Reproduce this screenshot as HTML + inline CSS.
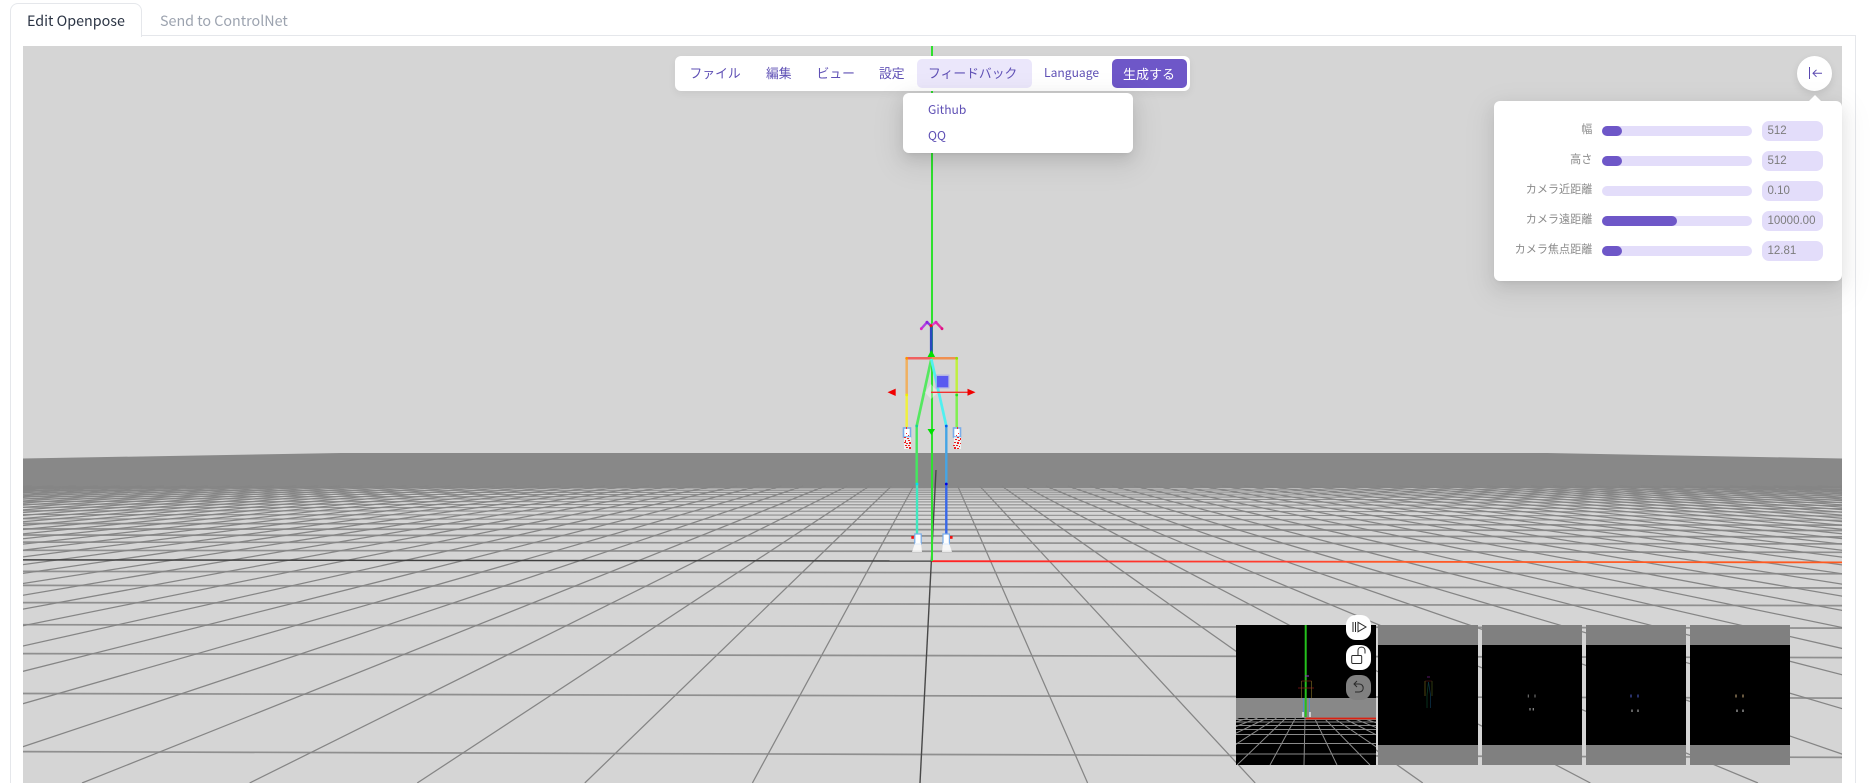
<!DOCTYPE html>
<html lang="ja">
<head>
<meta charset="utf-8">
<title>Edit Openpose</title>
<style>
html,body{margin:0;padding:0;background:#fff;width:1870px;height:783px;overflow:hidden}
body{position:relative;font-family:"Liberation Sans","Noto Sans CJK JP",sans-serif}
.abs{position:absolute}
.tabline{position:absolute;left:141px;top:35px;width:1715px;height:1px;background:#e5e7eb}
.tab{position:absolute;left:10px;top:3px;width:130px;height:33px;border:1px solid #e5e7eb;border-bottom:none;border-radius:8px 8px 0 0;background:#fff;box-sizing:content-box}
.vl{position:absolute;top:36px;width:1px;height:747px;background:#e5e7eb}
.t{position:absolute;font-family:"Noto Sans CJK JP",sans-serif;font-size:14.3px;line-height:20px;white-space:nowrap}
#cv{position:absolute;left:23px;top:46px;width:1819px;height:737px;overflow:hidden;background:#d5d5d5}
#menu{position:absolute;left:675px;top:56px;width:515px;height:35px;background:#fff;border-radius:6px;box-shadow:0 3px 8px rgba(0,0,0,.06)}
.mi{position:absolute;top:63px;font-family:"Noto Sans CJK JP",sans-serif;font-size:12.8px;line-height:20px;color:#5f50b5;white-space:nowrap}
.la{font-size:12.1px}
#hl{position:absolute;left:917px;top:59px;width:115px;height:29px;background:#ebe7fb;border-radius:5px}
#gen{position:absolute;left:1111.5px;top:59px;width:75px;height:29px;background:#6e57c8;border-radius:5px;color:#fff;font-family:"Noto Sans CJK JP",sans-serif;font-size:13px;line-height:29px;text-align:center}
#dd{position:absolute;left:903px;top:93px;width:230px;height:60px;background:#fff;border-radius:6px;box-shadow:0 6px 16px rgba(0,0,0,.1),0 3px 6px -4px rgba(0,0,0,.14),0 9px 28px 8px rgba(0,0,0,.06)}
#cb{position:absolute;left:1797px;top:56px;width:35px;height:35px;border-radius:50%;background:#fff;box-shadow:0 3px 8px rgba(0,0,0,.1)}
#pn{position:absolute;left:1494px;top:101px;width:348px;height:180px;background:#fff;border-radius:6px;box-shadow:0 6px 16px rgba(0,0,0,.08),0 3px 6px -4px rgba(0,0,0,.12),0 9px 28px 8px rgba(0,0,0,.05)}
.lb{position:absolute;left:1482.3px;width:110px;text-align:right;font-family:"Noto Sans CJK JP",sans-serif;font-size:11.1px;line-height:16px;color:#8a8a8a;white-space:nowrap}
.tr{position:absolute;left:1602px;width:150px;height:10px;border-radius:5px;background:#e3ddfa}
.fi{position:absolute;left:0;top:0;height:10px;border-radius:5px;background:#6e57c8}
.in{position:absolute;left:1762px;width:55px;padding-left:5.5px;height:20px;border-radius:7px;background:#e3ddfa;font-family:"Liberation Sans",sans-serif;font-size:11.5px;line-height:21px;color:#7c7c7c}
.th{position:absolute;top:625px;width:100px;height:140px;background:#000}
.th i{position:absolute;left:0;width:100px;height:20px;background:#808080;display:block}
.bt{position:absolute;left:1346px;width:25px;height:25px;border-radius:10px;background:#fff}
svg{display:block}
</style>
</head>
<body>
<div class="tabline"></div>
<div class="vl" style="left:10px"></div>
<div class="vl" style="left:1855px"></div>
<div class="tab"></div>
<div class="t" style="left:27px;top:11px;color:#2b3444">Edit Openpose</div>
<div class="t" style="left:160px;top:11px;color:#9ca3af">Send to ControlNet</div>

<div id="cv">
<svg width="1819" height="737" viewBox="23 46 1819 737" xmlns="http://www.w3.org/2000/svg">
<defs>
<linearGradient id="rx" gradientUnits="userSpaceOnUse" x1="932" y1="0" x2="1842" y2="0"><stop offset="0" stop-color="#ff2222"/><stop offset=".4" stop-color="#ff4030"/><stop offset=".5" stop-color="#ff5a28"/><stop offset="1" stop-color="#ff5a20"/></linearGradient>
</defs>
<rect x="23" y="46" width="1819" height="737" fill="#d5d5d5"/>
<polygon points="23,458.5 341,453 1547,453 1842,458.5 1842,488 23,488" fill="#888888"/>
<g fill="none" stroke="#8f8f8f" stroke-width="1.7">
<path d="M23 751.6L1842 757.4M23 693.5L1842 698.1M23 653.6L1842 657.6M23 624.7L1842 628.1M23 602.6L1842 605.6M23 585.4L1842 588M23 571.4L1842 573.8M23 550.3L1842 552.3M23 542.1L1842 543.9M23 535L1842 536.8M23 528.9L1842 530.5M23 523.5L1842 525.1"/>
</g>
<g fill="none" stroke="#8f8f8f" stroke-width="1.1">
<path d="M23 518.8L1842 520.2M23 514.5L1842 515.9M23 510.7L1842 511.9M23 507.3L1842 508.5M23 504.2L1842 505.4M23 501.4L1842 502.4M23 498.8L1842 499.8M23 496.4L1842 497.4M23 494.2L1842 495.2M23 492.2L1842 493.2M23 490.4L1842 491.2M23 488.6L1842 489.4"/>
</g>
<g fill="none" stroke="#858585" stroke-width="1.25">
<path d="M957.7 486L1087.6 783M979.7 486L1255.2 783M1001.8 486L1422.8 783M1023.8 486L1590.4 783M1045.9 486L1758 783M1067.9 486L1925.6 783M1089.9 486L2093.2 783M1112 486L2260.8 783M1134 486L2428.4 783M1156.1 486L2596 783M1178.2 486L2763.6 783M1200.2 486L2931.2 783M1222.3 486L3098.8 783M1244.3 486L3266.4 783M1266.4 486L3434 783M1288.4 486L3601.6 783M1310.5 486L3769.2 783M1332.5 486L3936.8 783M1354.6 486L4104.4 783M1376.6 486L4272 783M1398.7 486L4439.6 783M1420.7 486L4607.2 783M1442.8 486L4774.8 783M1464.8 486L4942.4 783M1486.9 486L5110 783M1508.9 486L5277.6 783M1530.9 486L5445.2 783M1553 486L5612.8 783M1575 486L5780.4 783M1597.1 486L5948 783M1619.2 486L6115.6 783M1641.2 486L6283.2 783M1663.3 486L6450.8 783M1685.3 486L6618.4 783M1707.4 486L6786 783M1729.4 486L6953.6 783M1751.5 486L7121.2 783M1773.5 486L7288.8 783M1795.6 486L7456.4 783M1817.6 486L7624 783M1839.7 486L7791.6 783M1861.7 486L7959.2 783"/>
<path d="M913.6 486L752.4 783M891.5 486L584.8 783M869.5 486L417.2 783M847.4 486L249.6 783M825.4 486L82 783M803.3 486L-85.6 783M781.3 486L-253.2 783M759.2 486L-420.8 783M737.2 486L-588.4 783M715.1 486L-756 783M693.1 486L-923.6 783M671 486L-1091.2 783M649 486L-1258.8 783M626.9 486L-1426.4 783M604.9 486L-1594 783M582.8 486L-1761.6 783M560.8 486L-1929.2 783M538.7 486L-2096.8 783M516.7 486L-2264.4 783M494.6 486L-2432 783M472.6 486L-2599.6 783M450.5 486L-2767.2 783M428.5 486L-2934.8 783M406.4 486L-3102.4 783M384.4 486L-3270 783M362.3 486L-3437.6 783M340.3 486L-3605.2 783M318.2 486L-3772.8 783M296.2 486L-3940.4 783M274.1 486L-4108 783M252.1 486L-4275.6 783M230 486L-4443.2 783M208 486L-4610.8 783M185.9 486L-4778.4 783M163.9 486L-4946 783M141.8 486L-5113.6 783M119.8 486L-5281.2 783M97.7 486L-5448.8 783M75.7 486L-5616.4 783M53.6 486L-5784 783M31.6 486L-5951.6 783M9.5 486L-6119.2 783"/>
</g>
<!-- axes -->
<path d="M23 559.9L932 561" stroke="#3f3f3f" stroke-width="1.5" fill="none"/>
<path d="M932 561.2L1842 562.4" stroke="url(#rx)" stroke-width="1.8" fill="none"/>
<path d="M936 470L920 783" stroke="#484848" stroke-width="1.4" fill="none"/>
<path d="M932 46V561" stroke="#2fe02f" stroke-width="2" fill="none"/>
<!-- skeleton -->
<g fill="none" stroke-linecap="butt">
<path d="M927 322.3L921.3 328.7" stroke="#b040e0" stroke-width="2.4"/>
<path d="M927 322.3L931 325.7" stroke="#8040e0" stroke-width="2.4"/>
<path d="M936 322.3L931 325.7" stroke="#e040d0" stroke-width="2.4"/>
<path d="M936 322.3L942 328.7" stroke="#e030a0" stroke-width="2.4"/>
<path d="M931.3 326V358" stroke="#2848c0" stroke-width="2.8"/>
<path d="M931.3 358.3H906.7" stroke="#f06060" stroke-width="2.5"/>
<path d="M931.3 358.3H956.7" stroke="#f09050" stroke-width="2.5"/>
<path d="M906.7 358.3V395" stroke="#f0b060" stroke-width="2.5"/>
<path d="M906.7 395V427" stroke="#f0f040" stroke-width="2.5"/>
<path d="M956.7 358.3V395" stroke="#c0f040" stroke-width="2.5"/>
<path d="M956.7 395V427" stroke="#80f050" stroke-width="2.5"/>
<path d="M931.3 359L916.7 426" stroke="#55e860" stroke-width="2.7"/>
<path d="M931.3 359L946.3 426" stroke="#50f0f0" stroke-width="2.7"/>
<path d="M916.7 426V484" stroke="#44e860" stroke-width="2.4"/>
<path d="M917 484V534" stroke="#40e8c0" stroke-width="2.4"/>
<path d="M946.3 426V484" stroke="#45a5e5" stroke-width="2.4"/>
<path d="M946.3 484V534" stroke="#3868e8" stroke-width="2.4"/>
</g>
<g>
<circle cx="931" cy="325.7" r="1.5" fill="#f01010"/>
<circle cx="927" cy="322.3" r="1.5" fill="#9020e0"/>
<circle cx="936" cy="322.3" r="1.5" fill="#e020c0"/>
<circle cx="921.3" cy="328.7" r="1.4" fill="#e020c0"/>
<circle cx="942" cy="328.7" r="1.4" fill="#e01080"/>
<circle cx="906.7" cy="358.3" r="1.4" fill="#ff9000"/>
<circle cx="956.7" cy="358.3" r="1.4" fill="#90e000"/>
<circle cx="906.7" cy="395" r="1.4" fill="#f0f000"/>
<circle cx="956.7" cy="395" r="1.4" fill="#20e020"/>
<circle cx="916.7" cy="426" r="1.4" fill="#10d890"/>
<circle cx="946.3" cy="426" r="1.4" fill="#0060f0"/>
<circle cx="917" cy="484" r="1.4" fill="#00e0f0"/>
<circle cx="946.3" cy="484" r="1.4" fill="#0000e0"/>
</g>
<!-- gizmo -->
<polygon points="931,384 938,392.5 931,399 925,392.5" fill="#fff" opacity=".35"/>
<rect x="935.5" y="374.5" width="14" height="14" fill="#9a9af0" opacity=".55"/>
<rect x="937" y="376" width="11.3" height="11.3" fill="#5a5af0"/>
<path d="M931 392.3H970" stroke="#f03030" stroke-width="1.3"/>
<polygon points="967.5,388.8 975.5,392.3 967.5,395.8" fill="#f00000"/>
<polygon points="887.5,392.3 895.7,388.6 895.7,396" fill="#f00000"/>
<polygon points="931.3,350 927.5,357 935.1,357" fill="#00e000"/>
<polygon points="931.3,435 927.5,429 935.1,429" fill="#00e000"/>
<!-- hands -->
<g>
<rect x="903.5" y="428" width="7" height="9" fill="#fff" stroke="#78acea" stroke-width="1.6"/>
<rect x="953.5" y="428" width="7" height="9" fill="#fff" stroke="#78acea" stroke-width="1.6"/>
<path d="M906 427h1v2h-1zM957 427h1v2h-1z" fill="#f03030"/>
<path d="M906 433h1v1h-1zM908 435h1v1h-1zM958 433h1v1h-1zM956 435h1v1h-1z" fill="#f03030"/>
<rect x="904" y="437" width="7" height="12" fill="#fff" opacity=".65"/>
<rect x="954" y="437" width="7" height="12" fill="#fff" opacity=".65"/>
<path d="M904 437h2v1h-2zM907 438h2v1h-2zM905 440h1v2h-1zM908 440h2v1h-2zM904 442h2v1h-2zM906 443h2v1h-2zM909 442h2v2h-2zM905 445h2v1h-2zM908 445h2v1h-2zM906 447h2v1h-2zM909 447h2v2h-2zM957 437h2v1h-2zM960 438h1v2h-1zM955 439h2v1h-2zM958 440h2v1h-2zM954 442h2v1h-2zM957 442h2v2h-2zM960 443h1v1h-1zM953 445h2v1h-2zM956 445h2v1h-2zM959 446h1v1h-1zM954 447h2v2h-2zM957 448h2v1h-2z" fill="#ee2020"/>
</g>
<!-- feet -->
<g>
<rect x="914.8" y="534" width="6.4" height="10" fill="#fff" stroke="#78acea" stroke-width="1.2"/>
<rect x="943" y="534" width="6.4" height="10" fill="#fff" stroke="#78acea" stroke-width="1.2"/>
<polygon points="915,543 921,543 922,552 912,552" fill="#fff" opacity=".8"/>
<polygon points="943,543 949,543 952,552 942,552" fill="#fff" opacity=".8"/>
<rect x="911.3" y="536" width="2.6" height="2.8" fill="#f01010"/>
<rect x="950" y="536" width="2.6" height="2.8" fill="#f01010"/>
</g>
</svg>
</div>

<div id="menu"></div>
<div id="hl"></div>
<div class="mi" style="left:689.5px">ファイル</div>
<div class="mi" style="left:766px">編集</div>
<div class="mi" style="left:816.5px">ビュー</div>
<div class="mi" style="left:879px">設定</div>
<div class="mi" style="left:928px">フィードバック</div>
<div class="mi la" style="left:1044px">Language</div>
<div id="gen">生成する</div>

<div id="dd"></div>
<div class="mi la" style="left:928px;top:100px">Github</div>
<div class="mi la" style="left:928px;top:126px">QQ</div>

<div id="cb"></div>
<svg class="abs" style="left:1800px;top:60px" width="30" height="28" viewBox="1800 60 30 28">
<path d="M1809.5 67V79M1822 73.3H1813M1816.5 69.8L1813 73.3L1816.5 76.8" fill="none" stroke="#5a48b0" stroke-width="1"/>
</svg>

<div id="pn"></div>
<svg class="abs" style="left:1808px;top:95px" width="14" height="7" viewBox="0 0 14 7"><polygon points="7,0 14,7 0,7" fill="#fff"/></svg>

<div class="lb" style="top:121px">幅</div>
<div class="lb" style="top:151px">高さ</div>
<div class="lb" style="top:181px">カメラ近距離</div>
<div class="lb" style="top:211px">カメラ遠距離</div>
<div class="lb" style="top:241px">カメラ焦点距離</div>

<div class="tr" style="top:126px"><div class="fi" style="width:20px"></div></div>
<div class="tr" style="top:156px"><div class="fi" style="width:20px"></div></div>
<div class="tr" style="top:186px"></div>
<div class="tr" style="top:216px"><div class="fi" style="width:75px"></div></div>
<div class="tr" style="top:246px"><div class="fi" style="width:20px"></div></div>

<div class="in" style="top:121px">512</div>
<div class="in" style="top:151px">512</div>
<div class="in" style="top:181px">0.10</div>
<div class="in" style="top:211px">10000.00</div>
<div class="in" style="top:241px">12.81</div>

<!-- previews -->
<svg class="abs" style="left:1236px;top:625px" width="140" height="140" viewBox="1236 625 140 140">
<rect x="1236" y="625" width="140" height="140" fill="#000"/>
<rect x="1236" y="698" width="140" height="20" fill="#888"/>
<g stroke="#8a8a8a" stroke-width="1" fill="none">
<path d="M1236 722H1376M1236 725.5H1376M1236 729.5H1376M1236 734.5H1376M1236 743.5H1376M1236 754H1376M1236 719.5H1376"/>
<path d="M1305 718L1304 765M1314.5 718L1337 765M1324 718L1370 765M1333.5 718L1403 765M1343 718L1436 765M1352.5 718L1469 765M1362 718L1502 765M1371.5 718L1535 765M1295.5 718L1270 765M1286 718L1237 765M1276.5 718L1204 765M1267 718L1171 765M1257.5 718L1138 765M1248 718L1105 765M1238.5 718L1072 765"/>
</g>
<path d="M1305.7 625V717" stroke="#24c01c" stroke-width="2"/>
<path d="M1305.7 718.5H1376" stroke="#dd2010" stroke-width="1.8"/>
<path d="M1298 688H1314" stroke="#801414" stroke-width=".8"/>
<path d="M1301.5 681H1311.5" stroke="#702010" stroke-width=".8"/>
<path d="M1301.5 681V698M1311.5 681V698" stroke="#706020" stroke-width=".7"/>
<path d="M1305 676H1309" stroke="#9030c0" stroke-width="1.1"/>
<path d="M1303.5 698V716M1309.5 698V716" stroke="#5090d0" stroke-width=".9"/>
<path d="M1303 712v5M1310 712v5" stroke="#fff" stroke-width="1.2"/>
</svg>

<div class="th" style="left:1378px"><i style="top:0"></i><i style="bottom:0"></i>
<svg class="abs" style="left:0;top:0" width="100" height="140" viewBox="1378 625 100 140">
<path d="M1425 681H1432" stroke="#4a1010" stroke-width=".7"/>
<path d="M1427 677H1430" stroke="#601870" stroke-width=".9"/>
<path d="M1425 681V696" stroke="#605414" stroke-width=".8"/>
<path d="M1432 681V696" stroke="#3a4814" stroke-width=".8"/>
<path d="M1428.5 682L1427 695V708" stroke="#0c3c24" stroke-width=".8" fill="none"/>
<path d="M1428.5 682L1430.5 695V708" stroke="#0c3048" stroke-width=".8" fill="none"/>
</svg></div>
<div class="th" style="left:1482px"><i style="top:0"></i><i style="bottom:0"></i>
<svg class="abs" style="left:0;top:0" width="100" height="140" viewBox="1482 625 100 140">
<path d="M1528.3 694.5v3M1535 694.5v3" stroke="#808080" stroke-width="1"/>
<path d="M1530 708v2.5M1533.3 708v2.5" stroke="#909090" stroke-width="1.2"/>
</svg></div>
<div class="th" style="left:1586px"><i style="top:0"></i><i style="bottom:0"></i>
<svg class="abs" style="left:0;top:0" width="100" height="140" viewBox="1586 625 100 140">
<path d="M1631 694.5v3M1638 694.5v3" stroke="#5060d0" stroke-width="1"/>
<path d="M1632 709.5v2.5M1638 709.5v2.5" stroke="#a0a0a0" stroke-width="1.2"/>
</svg></div>
<div class="th" style="left:1690px"><i style="top:0"></i><i style="bottom:0"></i>
<svg class="abs" style="left:0;top:0" width="100" height="140" viewBox="1690 625 100 140">
<path d="M1736 694.5v3M1743 694.5v3" stroke="#d0b080" stroke-width="1"/>
<path d="M1737 709.5v2.5M1743 709.5v2.5" stroke="#b0b0b0" stroke-width="1.2"/>
</svg></div>

<!-- preview buttons -->
<div class="bt" style="top:615px"></div>
<div class="bt" style="top:645px"></div>
<div class="bt" style="top:675px;background:#808080"></div>
<svg class="abs" style="left:1346px;top:615px" width="25" height="85" viewBox="1346 615 25 85">
<g fill="none" stroke="#2a2a2a" stroke-width="1">
<path d="M1353 622V632M1355.5 622V632"/>
<path d="M1358 622.3L1366 627L1358 631.7Z"/>
<rect x="1351.7" y="655.5" width="10" height="8" rx="1.2"/>
<path d="M1358 655.5V650.5C1358 646 1365 646 1365 650.5V653.5"/>
<path d="M1357 681L1354 684L1357 687M1354 684H1359.3C1364.5 684 1364.5 692 1359.3 692H1355"/>
</g>
</svg>
</body>
</html>
